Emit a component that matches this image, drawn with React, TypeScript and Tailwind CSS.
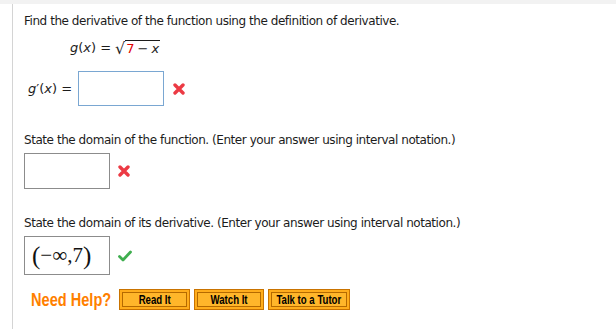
// WebAssign-style question block
function RedX() {
  return (
    <svg width="12" height="12" viewBox="0 0 12 12" className="shrink-0">
      <path d="M2 2 L10 10 M10 2 L2 10" stroke="#ec3a44" strokeWidth="3.4" strokeLinecap="round" />
    </svg>
  );
}

function GreenCheck() {
  return (
    <svg width="14" height="12" viewBox="0 0 14 12" className="shrink-0">
      <path d="M1.5 6.5 L5 10 L12.5 2" fill="none" stroke="#3fae4f" strokeWidth="2.8" strokeLinecap="round" strokeLinejoin="round" />
    </svg>
  );
}

function HelpButton({ label, width }: { label: string; width: string }) {
  return (
    <div className={`${width} h-[21px] border border-[#c97300] bg-[#ffad1c] p-[2px]`}>
      <div className="h-full border border-[#b56a00] bg-[#ffb62a] flex items-center justify-center overflow-hidden">
        <span className="inline-block scale-x-[0.74] text-[13px] font-bold text-black leading-none whitespace-nowrap font-['Liberation_Sans',Arial,sans-serif]">
          {label}
        </span>
      </div>
    </div>
  );
}

export default function App() {
  return (
    <div className="w-[616px] h-[329px] bg-white overflow-hidden text-[#1c1c1c] font-['DejaVu_Sans',Verdana,sans-serif] text-[12px] tracking-[-0.45px]">
      <div className="h-[4px] bg-[#f2f2f2]" />
      <div className="ml-[12px] h-[325px] border-l border-[#d4d4d4] pl-[11px] pt-[10px]">
        <p className="leading-[15px]">Find the derivative of the function using the definition of derivative.</p>

        <div className="mt-[8px] ml-[46px] flex items-end h-[20px] text-[13px] tracking-normal">
          <span className="italic">g</span>
          <span>(</span>
          <span className="italic">x</span>
          <span>)</span>
          <span className="mx-[4px]">=</span>
          <span className="text-[16px] leading-none">√</span>
          <span className="flex border-t border-[#1c1c1c] pl-[1px] pr-[1px] leading-[16px]">
            <span className="text-[#e00000]">7</span>
            <span className="mx-[3px]">−</span>
            <span className="italic">x</span>
          </span>
        </div>

        <div className="mt-[14px] ml-[4px] flex items-center tracking-normal">
          <span className="text-[13px]">
            <span className="italic">g</span>′(<span className="italic">x</span>) =
          </span>
          <div className="ml-[6px] w-[86px] h-[35px] border border-[#7aa7d2]" />
          <div className="ml-[9px]">
            <RedX />
          </div>
        </div>

        <p className="mt-[27px] leading-[15px]">State the domain of the function. (Enter your answer using interval notation.)</p>
        <div className="mt-[5px] flex items-center">
          <div className="w-[86px] h-[36px] border border-[#8c8c8c]" />
          <div className="ml-[8px]">
            <RedX />
          </div>
        </div>

        <p className="mt-[27px] leading-[15px]">State the domain of its derivative. (Enter your answer using interval notation.)</p>
        <div className="mt-[5px] flex items-center">
          <div className="w-[86px] h-[39px] border border-[#8c8c8c] flex items-center pl-[7px] font-['Liberation_Serif','Times_New_Roman',serif] text-[21px] text-[#111] tracking-normal">
            <span className="text-[25px] leading-none">(</span>
            <span>−∞,7</span>
            <span className="text-[25px] leading-none">)</span>
          </div>
          <div className="ml-[8px]">
            <GreenCheck />
          </div>
        </div>

        <div className="mt-[14px] flex items-center tracking-normal">
          <span className="ml-[7px] w-[88px] inline-block origin-left scale-x-[0.81] whitespace-nowrap text-[18px] font-bold text-[#ff7f00] leading-none font-['Liberation_Sans',Arial,sans-serif]">
            Need Help?
          </span>
          <div className="flex gap-[4px]">
            <HelpButton label="Read It" width="w-[71px]" />
            <HelpButton label="Watch It" width="w-[70px]" />
            <HelpButton label="Talk to a Tutor" width="w-[82px]" />
          </div>
        </div>
      </div>
    </div>
  );
}
